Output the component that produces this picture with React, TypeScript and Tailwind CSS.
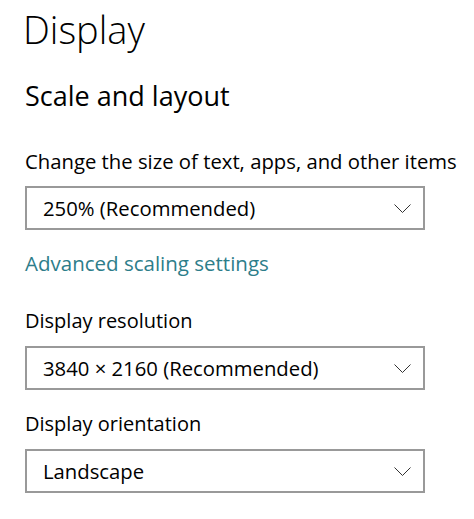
import React from "react";

const font = { fontFamily: '"Open Sans", "Noto Sans", sans-serif' };

function Chevron() {
  return (
    <svg width="17" height="9" viewBox="0 0 17 9" fill="none">
      <polyline points="0.5,0.5 8.5,8.5 16.5,0.5" stroke="#333333" strokeWidth="1" />
    </svg>
  );
}

function Select({ value }: { value: string }) {
  return (
    <div className="flex h-[44px] w-[400px] items-center justify-between border-2 border-[#999999] bg-white pl-[16px] pr-[12px]">
      <span className="whitespace-nowrap text-[20.3px] leading-[40px] text-[#000000]">{value}</span>
      <Chevron />
    </div>
  );
}

export default function App() {
  return (
    <div className="h-[519px] w-[474px] overflow-hidden bg-white pl-[25px] pt-[5px] text-black" style={font}>
      <div className="-ml-[2px] text-[38px] font-light leading-[48px]">Display</div>
      <div className="mt-[25px] text-[27px] leading-[36px]">Scale and layout</div>
      <div className="mt-[33px] whitespace-nowrap text-[20.3px] leading-[28px]">Change the size of text, apps, and other items</div>
      <div className="mt-[11px]">
        <Select value="250% (Recommended)" />
      </div>
      <div className="mt-[19px] text-[20.5px] leading-[28px] text-[#2d7d8a]">Advanced scaling settings</div>
      <div className="mt-[30px] text-[20px] leading-[28px]">Display resolution</div>
      <div className="mt-[11px]">
        <Select value="3840 × 2160 (Recommended)" />
      </div>
      <div className="mt-[20px] text-[20px] leading-[28px]">Display orientation</div>
      <div className="mt-[11px]">
        <Select value="Landscape" />
      </div>
    </div>
  );
}
